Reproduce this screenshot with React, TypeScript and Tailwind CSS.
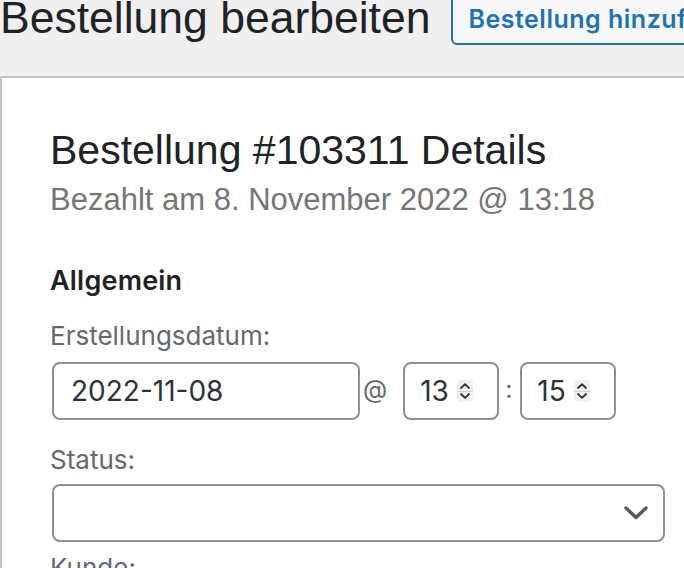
function Spinner() {
  return (
    <div className="flex h-[22px] w-[16px] flex-col items-center justify-between rounded-[4px] bg-[#efefef] py-[2px]">
      <svg width="12" height="8" viewBox="0 0 12 8" fill="none">
        <path d="M2 6 L6 2.2 L10 6" stroke="#2c3338" strokeWidth="1.8" strokeLinecap="round" strokeLinejoin="round" />
      </svg>
      <div className="h-px w-full bg-[#d0d0d0]" />
      <svg width="12" height="8" viewBox="0 0 12 8" fill="none">
        <path d="M2 2 L6 5.8 L10 2" stroke="#2c3338" strokeWidth="1.8" strokeLinecap="round" strokeLinejoin="round" />
      </svg>
    </div>
  );
}

function TimeField({ value }: { value: string }) {
  return (
    <div className="flex h-[58px] w-[96px] shrink-0 items-center rounded-[8px] border-2 border-[#8c8f94] bg-white pl-[15px]">
      <span className="text-[28px] leading-none text-[#2c3338]">{value}</span>
      <div className="ml-[8px]">
        <Spinner />
      </div>
    </div>
  );
}

export default function App() {
  return (
    <div
      className="h-[568px] w-[684px] overflow-hidden bg-[#f0f0f1]"
      style={{ fontFamily: 'Inter, "Liberation Sans", sans-serif' }}
    >
      {/* Page header */}
      <div className="flex h-[76px] items-start">
        <h1
          className="mt-[-4px] whitespace-nowrap text-[44.5px] font-normal leading-none text-[#1d2327]"
          style={{ fontFamily: '"Liberation Sans", Arial, sans-serif' }}
        >
          Bestellung bearbeiten
        </h1>
        <div className="ml-[20px] mt-[-10px] flex h-[55px] shrink-0 items-end whitespace-nowrap rounded-[6px] border-2 border-[#2271b1] bg-[#f6f7f7] pb-[11px] pl-[16px] pr-[20px]">
          <span className="text-[25px] font-semibold leading-none tracking-[0.5px] text-[#2271b1]">
            Bestellung hinzufügen
          </span>
        </div>
      </div>

      {/* Panel */}
      <div className="h-[600px] border-l-2 border-t-2 border-[#c3c4c7] bg-white pl-[48px] pt-[52px]">
        <h2
          className="whitespace-nowrap text-[41px] font-normal leading-none text-[#1d2327]"
          style={{ fontFamily: '"Liberation Sans", Arial, sans-serif' }}
        >
          Bestellung #103311 Details
        </h2>
        <p
          className="mt-[13px] whitespace-nowrap text-[31px] leading-none text-[#757575]"
          style={{ fontFamily: '"Liberation Sans", Arial, sans-serif' }}
        >
          Bezahlt am 8. November 2022 @ 13:18
        </p>

        <h3 className="mt-[52px] text-[27px] font-semibold leading-none tracking-[0.2px] text-[#1d2327]">Allgemein</h3>

        <label className="mt-[29px] block text-[26px] leading-none text-[#646970]">Erstellungsdatum:</label>
        <div className="ml-[2px] mt-[13px] flex items-center">
          <div className="flex h-[58px] w-[308px] shrink-0 items-center rounded-[8px] border-2 border-[#8c8f94] bg-white pl-[17px]">
            <span className="text-[28px] leading-none text-[#2c3338]">2022-11-08</span>
          </div>
          <span className="mb-[4px] ml-[3px] mr-[16px] text-[25px] leading-none text-[#646970]">@</span>
          <TimeField value="13" />
          <span className="mb-[4px] ml-[6px] mr-[8px] text-[25px] leading-none text-[#646970]">:</span>
          <TimeField value="15" />
        </div>

        <label className="mt-[27px] block text-[26px] leading-none text-[#646970]">Status:</label>
        <div className="ml-[2px] mt-[11px] flex h-[58px] w-[613px] items-center justify-end rounded-[8px] border-2 border-[#8c8f94] bg-white pr-[14px]">
          <svg width="26" height="16" viewBox="0 0 26 16" fill="none">
            <path d="M3 3 L13 12.5 L23 3" stroke="#50575e" strokeWidth="3.4" strokeLinecap="round" strokeLinejoin="round" />
          </svg>
        </div>

        <label className="mt-[13px] block text-[26px] leading-none text-[#646970]">Kunde:</label>
      </div>
    </div>
  );
}
